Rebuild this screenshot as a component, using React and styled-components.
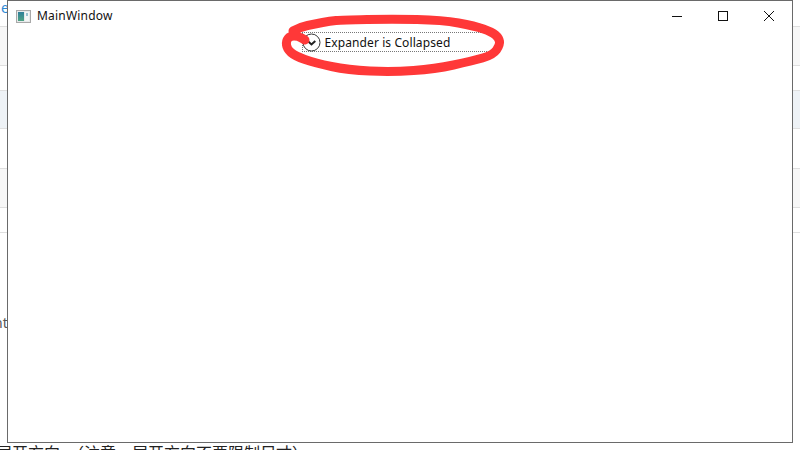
import styled, { createGlobalStyle } from "styled-components";

const GlobalStyle = createGlobalStyle`
  html, body {
    margin: 0;
    padding: 0;
    background: #fff;
    overflow: hidden;
  }
`;

const Page = styled.div`
  position: relative;
  width: 800px;
  height: 450px;
  overflow: hidden;
  background: #fff;
  font-family: "Noto Sans", "Noto Sans CJK SC", sans-serif;
`;

const Row = styled.div`
  box-sizing: border-box;
  height: ${(p) => p.$h}px;
  background: ${(p) => p.$bg || "#fff"};
  border-bottom: 1px solid #dfdfdf;
`;

const RowLink = styled.span`
  display: block;
  padding-left: 1px;
  color: #2e8ad6;
  font-size: 14px;
  line-height: 15px;
`;

const StrayText = styled.div`
  margin-top: 80px;
  height: 127px;
  margin-left: -6px;
  color: #555;
  font-size: 14px;
  line-height: 19px;
`;

const BottomText = styled.div`
  margin-left: -4px;
  white-space: nowrap;
  color: #222;
  font-size: 16px;
  line-height: 24px;
  font-family: "Noto Sans CJK SC", sans-serif;
`;

const Window = styled.div`
  position: absolute;
  left: 7px;
  top: 0;
  box-sizing: border-box;
  width: 786px;
  height: 443px;
  background: #fff;
  border: 1px solid #6a6a6a;
  display: flex;
  flex-direction: column;
`;

const TitleBar = styled.div`
  height: 30px;
  display: flex;
  align-items: center;
  padding-left: 8px;
  flex-shrink: 0;
`;

const Title = styled.span`
  margin: -2px 0 0 6px;
  flex: 1;
  color: #111;
  font-size: 12px;
  letter-spacing: 0.2px;
`;

const CaptionButton = styled.div`
  width: 46px;
  height: 30px;
  display: flex;
  align-items: center;
  justify-content: center;
`;

const Content = styled.div`
  flex: 1;
  display: flex;
  justify-content: center;
  align-items: flex-start;
  padding-top: 1px;
`;

const Expander = styled.div`
  box-sizing: border-box;
  width: 193px;
  height: 20px;
  margin-right: 4px;
  display: flex;
  align-items: center;
  gap: 4px;
  border-style: dotted;
  border-color: #777;
  border-width: 1px 0 1px 1px;
`;

const Toggle = styled.svg`
  margin-left: -1px;
  flex-shrink: 0;
`;

const Label = styled.span`
  color: #111;
  font-size: 12px;
  letter-spacing: 0.1px;
  white-space: nowrap;
`;

const Scribble = styled.svg`
  position: absolute;
  left: 0;
  top: 0;
  pointer-events: none;
`;

const AppIcon = () => (
  <svg width="15" height="13" viewBox="0 0 15 13">
    <defs>
      <linearGradient id="pane" x1="0" y1="0" x2="0" y2="1">
        <stop offset="0" stopColor="#2f7f9a" />
        <stop offset="1" stopColor="#4fa383" />
      </linearGradient>
    </defs>
    <rect x="0.5" y="0.5" width="14" height="12" fill="#e6e9ea" stroke="#a9a9a9" />
    <rect x="2" y="2" width="6" height="9" fill="url(#pane)" />
    <rect x="9" y="2" width="4" height="9" fill="#f4f6f6" />
    <rect x="10" y="3" width="2" height="3" fill="#9cc3d0" />
  </svg>
);

const MinimizeIcon = () => (
  <svg width="10" height="10" viewBox="0 0 10 10">
    <path d="M0 5.5H10" stroke="#111" strokeWidth="1" />
  </svg>
);

const MaximizeIcon = () => (
  <svg width="10" height="10" viewBox="0 0 10 10">
    <rect x="0.5" y="0.5" width="9" height="9" fill="none" stroke="#111" />
  </svg>
);

const CloseIcon = () => (
  <svg width="10" height="10" viewBox="0 0 10 10">
    <path d="M0 0L10 10M10 0L0 10" stroke="#111" strokeWidth="1" />
  </svg>
);

const ChevronCircle = () => (
  <Toggle width="19" height="19" viewBox="0 0 19 19">
    <circle cx="9.5" cy="9.5" r="8.5" fill="#fff" stroke="#333" />
    <path d="M5.7 8L9.5 11.5L13.3 8" fill="none" stroke="#222" strokeWidth="2" />
  </Toggle>
);

const scribblePoints = [
  [293, 31], [300, 27], [315, 24], [330, 21], [342, 20], [392, 19], [442, 20], [475, 26],
  [492, 32], [499, 38], [500, 45], [493, 55], [472, 61], [435, 69], [392, 72],
  [348, 70], [315, 63], [295, 56], [287, 49], [286, 41], [290, 36], [298, 36], [305, 40],
];

// smooth the hand drawn line through midpoints
const smoothLine = (pts) => {
  let d = `M${pts[0][0]} ${pts[0][1]}`;
  for (let i = 1; i < pts.length - 1; i++) {
    const mx = (pts[i][0] + pts[i + 1][0]) / 2;
    const my = (pts[i][1] + pts[i + 1][1]) / 2;
    d += `Q${pts[i][0]} ${pts[i][1]} ${mx} ${my}`;
  }
  const last = pts[pts.length - 1];
  return `${d}L${last[0]} ${last[1]}`;
};

const App = () => {
  return (
    <Page>
      <GlobalStyle />
      <Row $h={27}>
        <RowLink>e</RowLink>
      </Row>
      <Row $h={39} $bg="#f7f7f7" />
      <Row $h={25} />
      <Row $h={38} $bg="#eef2f6" />
      <Row $h={40} />
      <Row $h={39} $bg="#f7f7f7" />
      <Row $h={25} />
      <StrayText>nt</StrayText>
      <BottomText>展开方向。（注意，展开方向不要限制尺寸）</BottomText>

      <Window>
        <TitleBar>
          <AppIcon />
          <Title>MainWindow</Title>
          <CaptionButton>
            <MinimizeIcon />
          </CaptionButton>
          <CaptionButton>
            <MaximizeIcon />
          </CaptionButton>
          <CaptionButton>
            <CloseIcon />
          </CaptionButton>
        </TitleBar>
        <Content>
          <Expander>
            <ChevronCircle />
            <Label>Expander is Collapsed</Label>
          </Expander>
        </Content>
      </Window>

      <Scribble width="800" height="450" viewBox="0 0 800 450">
        <path
          d={smoothLine(scribblePoints)}
          fill="none"
          stroke="#ff3838"
          strokeWidth="9"
          strokeLinejoin="round"
          strokeLinecap="round"
        />
      </Scribble>
    </Page>
  );
};

export default App;
